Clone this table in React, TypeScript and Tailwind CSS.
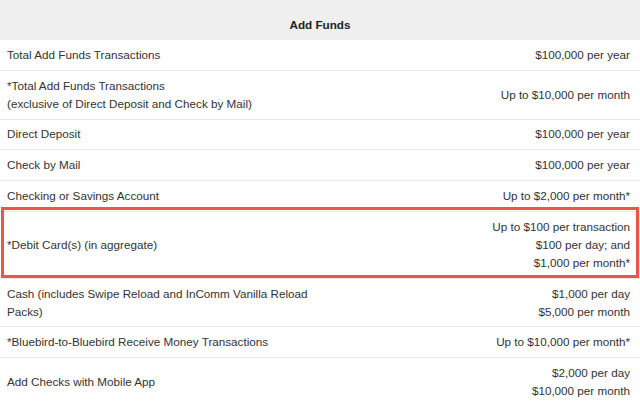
const rows: { label: string[]; value: string[]; highlight?: boolean }[] = [
  { label: ['Total Add Funds Transactions'], value: ['$100,000 per year'] },
  {
    label: ['*Total Add Funds Transactions', '(exclusive of Direct Deposit and Check by Mail)'],
    value: ['Up to $10,000 per month'],
  },
  { label: ['Direct Deposit'], value: ['$100,000 per year'] },
  { label: ['Check by Mail'], value: ['$100,000 per year'] },
  { label: ['Checking or Savings Account'], value: ['Up to $2,000 per month*'] },
  {
    label: ['*Debit Card(s) (in aggregate)'],
    value: ['Up to $100 per transaction', '$100 per day; and', '$1,000 per month*'],
    highlight: true,
  },
  {
    label: ['Cash (includes Swipe Reload and InComm Vanilla Reload Packs)'],
    value: ['$1,000 per day', '$5,000 per month'],
  },
  { label: ['*Bluebird-to-Bluebird Receive Money Transactions'], value: ['Up to $10,000 per month*'] },
  { label: ['Add Checks with Mobile App'], value: ['$2,000 per day', '$10,000 per month'] },
];

export default function App() {
  return (
    <div className="w-[640px] h-[404px] overflow-hidden bg-white text-[11.7px] leading-[18px] text-[#333] font-['Liberation_Sans',Arial,sans-serif]">
      {/* HEADER */}
      <div className="h-[40px] bg-[#efefef] flex items-center justify-center font-bold text-[#222] pt-[9px]">
        Add Funds
      </div>

      {rows.map((row, i) => (
        <div
          key={i}
          className="relative flex items-center border-b border-[#e8e8e8] py-[5.9px] pl-[7px] pr-[10px]"
        >
          <div className="w-[310px]">
            {row.label.map(l => (
              <div key={l}>{l}</div>
            ))}
          </div>
          <div className="flex-1 text-right">
            {row.value.map(v => (
              <div key={v}>{v}</div>
            ))}
          </div>

          {row.highlight && (
            <div className="absolute left-[1px] right-[1px] -top-[5px] bottom-0 border-[3px] border-[#e8574a] pointer-events-none" />
          )}
        </div>
      ))}
    </div>
  );
}
